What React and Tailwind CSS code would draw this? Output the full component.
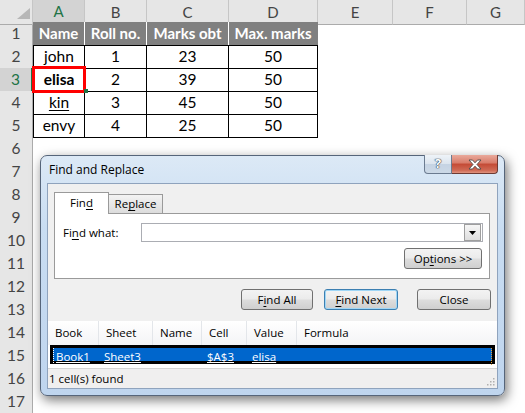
import React from "react";

const COLS = "grid grid-cols-[33px_52px_62px_82px_89px_75px_74px_1fr]";

function ColumnHeader() {
  const letters = ["A", "B", "C", "D", "E", "F", "G"];
  return (
    <div className={`${COLS} h-[22px]`}>
      <div className="relative bg-[#e6e6e6] border-r border-b border-r-[#c6c6c6] border-b-[#ababab]">
        <svg className="absolute left-0 top-0" width="33" height="22" viewBox="0 0 33 22">
          <polygon points="30,8 30,19 17,19" fill="#b7b7b7" />
        </svg>
      </div>
      {letters.map((l) =>
        l === "A" ? (
          <div
            key={l}
            className="flex items-center justify-center bg-[#d3d3d3] text-[#217346] border-r border-r-[#c6c6c6] border-b-2 border-b-[#217346] text-[15px]"
          >
            {l}
          </div>
        ) : (
          <div
            key={l}
            className="flex items-center justify-center bg-[#e6e6e6] text-[#444] border-r border-r-[#c6c6c6] border-b border-b-[#ababab] text-[15px]"
          >
            {l}
          </div>
        )
      )}
    </div>
  );
}

function RowHead({ n }) {
  if (n === 3) {
    return (
      <div className="flex items-center justify-center bg-[#d3d3d3] text-[#217346] border-b border-b-[#c6c6c6] border-r-2 border-r-[#217346] text-[15.5px]">
        {n}
      </div>
    );
  }
  return (
    <div className="flex items-center justify-center bg-[#e6e6e6] text-[#444] border-b border-b-[#c6c6c6] border-r border-r-[#ababab] text-[15.5px]">
      {n}
    </div>
  );
}

const headerCells = ["Name", "Roll no.", "Marks obt", "Max. marks"];
const dataRows = [
  ["john", "1", "23", "50"],
  ["elisa", "2", "39", "50"],
  ["kin", "3", "45", "50"],
  ["envy", "4", "25", "50"],
];

function TableHeaderRow() {
  return (
    <div className={`${COLS} h-[23px]`}>
      <RowHead n={1} />
      {headerCells.map((t, i) => (
        <div
          key={t}
          className={`flex items-center justify-center bg-[#808080] text-white font-bold text-[15px] border-b border-b-black ${
            i < 3 ? "border-r border-r-white" : "border-r border-r-[#808080]"
          }`}
        >
          {t}
        </div>
      ))}
      <div />
      <div />
      <div />
    </div>
  );
}

function DataRow({ n, cells }) {
  return (
    <div className={`${COLS} h-[23px]`}>
      <RowHead n={n} />
      {cells.map((t, i) => (
        <div
          key={i}
          className={`relative flex items-center justify-center text-black text-[15.5px] border-r border-b border-black ${
            i === 0 ? "border-l" : ""
          } ${n === 3 && i === 0 ? "font-bold" : ""} ${n === 4 && i === 0 ? "underline underline-offset-2" : ""}`}
        >
          {t}
        </div>
      ))}
      <div />
      <div />
      <div />
    </div>
  );
}

function EmptyRow({ n }) {
  return (
    <div className={`${COLS} h-[23px]`}>
      <RowHead n={n} />
      <div />
      <div />
      <div />
      <div />
      <div />
      <div />
      <div />
    </div>
  );
}

function Key({ children }) {
  return <span className="underline underline-offset-[2px]">{children}</span>;
}

const btn =
  "h-[21px] rounded-[3px] border flex items-center justify-center bg-[linear-gradient(to_bottom,#f3f3f3_0%,#ebebeb_48%,#dddddd_52%,#cfcfcf_100%)]";

function Dialog() {
  return (
    <div className="absolute left-[40px] top-[155px] w-[465px] h-[241px] rounded-[7px] border border-[#56657a] bg-[linear-gradient(to_bottom,#dce9f6_0%,#c9ddf2_30%,#bfd5ee_100%)] shadow-[2px_4px_12px_rgba(0,0,0,0.55)] px-[6px] pb-[6px] flex flex-col font-['Open_Sans',sans-serif] text-[11.5px] text-black">
      <div className="h-[27px] flex justify-between shrink-0">
        <span className="self-center pl-[2px] pt-[1px] text-[12px]">Find and Replace</span>
        <div className="flex -mt-px h-[19px]">
          <div className="w-[28px] h-full rounded-bl-[4px] border border-t-0 border-[#6b7b90] bg-[linear-gradient(to_bottom,#eef3f8_0%,#dbe4ee_50%,#c5d3e3_50%,#ccd9e7_100%)] flex items-center justify-center text-[13px] font-bold text-white [text-shadow:0_0_1px_#2b3a4d,0_0_1px_#2b3a4d,0_0_1px_#2b3a4d]">
            ?
          </div>
          <div className="w-[46px] h-full rounded-br-[4px] border border-t-0 border-l-0 border-[#6e3a33] bg-[linear-gradient(to_bottom,#e9a99b_0%,#d87b69_45%,#c44a35_50%,#cf6a55_85%,#e0937f_100%)] flex items-center justify-center">
            <svg width="14" height="11" viewBox="0 0 14 11">
              <path
                d="M1 1 L4.5 1 L7 3.8 L9.5 1 L13 1 L9 5.5 L13 10 L9.5 10 L7 7.2 L4.5 10 L1 10 L5 5.5 Z"
                fill="#ffffff"
                stroke="#4a4a4a"
                strokeWidth="0.9"
                strokeLinejoin="round"
              />
            </svg>
          </div>
        </div>
      </div>
      <div className="flex-1 border border-[#8fa3bd] bg-[#f0f0f0] flex flex-col">
        <div className="relative z-10 mt-[8px] ml-[6px] h-[22px] -mb-px flex items-end">
          <div className="w-[55px] h-[22px] bg-white border border-b-0 border-[#9a9a9a] flex items-center justify-center pb-[1px]">
            Fin<Key>d</Key>
          </div>
          <div className="w-[54px] h-[20px] border border-l-0 border-[#9a9a9a] bg-[linear-gradient(to_bottom,#f3f3f3,#dcdcdc)] flex items-center justify-center">
            Re<Key>p</Key>lace
          </div>
        </div>
        <div className="ml-[6px] mr-[7px] h-[66px] border border-[#9a9a9a] bg-white pt-[9px] pl-[8px] pr-[6px] flex flex-col shrink-0">
          <div className="flex items-center h-[19px]">
            <span className="w-[78px]">
              Fi<Key>n</Key>d what:
            </span>
            <div className="flex-1 h-[19px] border border-[#abadb3] bg-white flex justify-end items-center pr-px">
              <div className="w-[17px] h-[17px] border border-[#9e9e9e] bg-[linear-gradient(to_bottom,#f6f6f6,#dedede)] flex items-center justify-center">
                <svg width="7" height="4" viewBox="0 0 7 4">
                  <polygon points="0,0 7,0 3.5,4" fill="#000" />
                </svg>
              </div>
            </div>
          </div>
          <div className="flex justify-end mt-[6px] pr-[1px]">
            <div className={`${btn} w-[78px] border-[#707070]`}>
              Op<Key>t</Key>ions &gt;&gt;
            </div>
          </div>
        </div>
        <div className="mt-[10px] h-[21px] flex justify-end pr-[6px] shrink-0">
          <div className={`${btn} w-[72px] border-[#707070]`}>
            F<Key>i</Key>nd All
          </div>
          <div className={`${btn} w-[74px] ml-[11px] border-[#3c7fb1] shadow-[inset_0_0_0_1px_#9fd6f6]`}>
            <Key>F</Key>ind Next
          </div>
          <div className={`${btn} w-[74px] ml-[19px] border-[#707070]`}>Close</div>
        </div>
        <div className="mt-[11px] bg-white border-b border-[#d5d5d5] shrink-0">
          <div className="grid grid-cols-[51px_54px_49px_45px_50px_1fr] h-[24px] bg-[linear-gradient(to_bottom,#ffffff,#f3f4f6)]">
            {["Book", "Sheet", "Name", "Cell", "Value", "Formula"].map((h, i) => (
              <div
                key={h}
                className={`flex items-center pl-[7px] ${i < 5 ? "border-r border-[#e3e6ea]" : ""}`}
              >
                {h}
              </div>
            ))}
          </div>
          <div className="h-[19px] mx-[2px] border-[3px] border-black bg-[#0066cc] grid grid-cols-[46px_54px_49px_45px_50px_1fr] text-white">
            <div className="flex items-center pl-[2px] border-l border-dotted border-white">
              <span className="underline">Book1</span>
            </div>
            <div className="flex items-center pl-[5px]">
              <span className="underline">Sheet3</span>
            </div>
            <div />
            <div className="flex items-center pl-[5px]">
              <span className="underline">$A$3</span>
            </div>
            <div className="flex items-center pl-[5px]">
              <span className="underline">elisa</span>
            </div>
            <div className="border-r border-dotted border-[#e0a040]" />
          </div>
          <div className="h-[4px]" />
        </div>
        <div className="flex-1 bg-[#f0efef] flex items-center justify-between pl-[1px] pr-[2px]">
          <span>1 cell(s) found</span>
          <svg width="10" height="10" viewBox="0 0 10 10" className="self-end mb-[2px]">
            {[
              [8, 2],
              [8, 5],
              [5, 5],
              [8, 8],
              [5, 8],
              [2, 8],
            ].map(([x, y], i) => (
              <rect key={i} x={x} y={y} width="1.5" height="1.5" fill="#b0b0b0" />
            ))}
          </svg>
        </div>
      </div>
    </div>
  );
}

export default function App() {
  const empty = [];
  for (let n = 6; n <= 17; n++) empty.push(n);
  return (
    <div className="relative w-[525px] h-[413px] overflow-hidden bg-white font-['Lato',sans-serif]">
      <ColumnHeader />
      <TableHeaderRow />
      {dataRows.map((r, i) => (
        <DataRow key={i} n={i + 2} cells={r} />
      ))}
      {empty.map((n) => (
        <EmptyRow key={n} n={n} />
      ))}
      <div className="absolute left-[32px] top-[66px] w-[54px] h-[27px] border-[3px] border-[#ff0000]" />
      <div className="absolute left-[84px] top-[89px] w-[4px] h-[4px] bg-[#217346]" />
      <Dialog />
    </div>
  );
}
